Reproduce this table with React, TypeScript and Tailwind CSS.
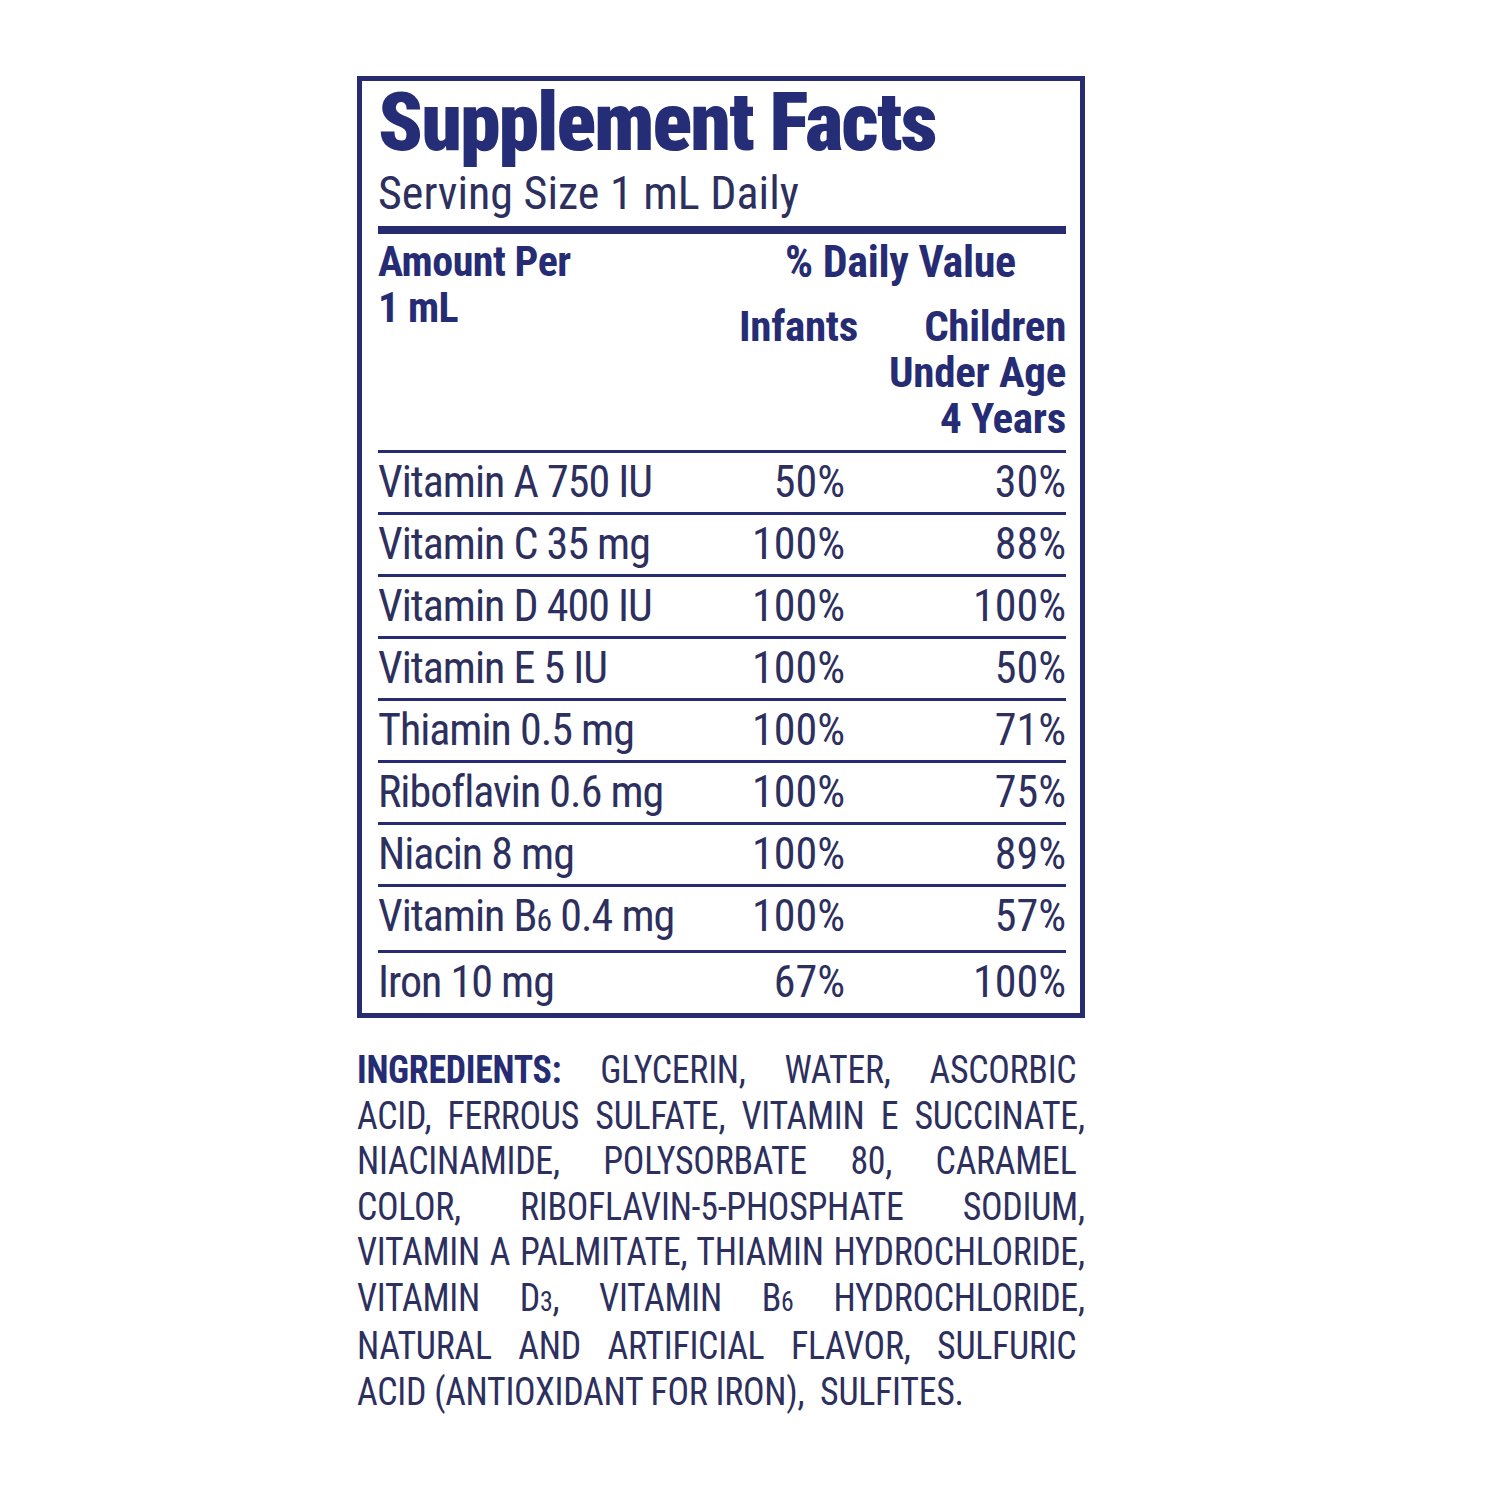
import React from "react";

type Row = { name: React.ReactNode; infants: string; children: string };

const Sub = ({ children }: { children: React.ReactNode }) => (
  <span className="text-[0.72em]">{children}</span>
);

const rows: Row[] = [
  { name: "Vitamin A 750 IU", infants: "50%", children: "30%" },
  { name: "Vitamin C 35 mg", infants: "100%", children: "88%" },
  { name: "Vitamin D 400 IU", infants: "100%", children: "100%" },
  { name: "Vitamin E 5 IU", infants: "100%", children: "50%" },
  { name: "Thiamin 0.5 mg", infants: "100%", children: "71%" },
  { name: "Riboflavin 0.6 mg", infants: "100%", children: "75%" },
  { name: "Niacin 8 mg", infants: "100%", children: "89%" },
  {
    name: (
      <>
        Vitamin B<Sub>6</Sub> 0.4 mg
      </>
    ),
    infants: "100%",
    children: "57%",
  },
  { name: "Iron 10 mg", infants: "67%", children: "100%" },
];

// ingredient lines, justified one by one like the printed panel
const ingredientLines: { text: React.ReactNode; pad?: boolean; last?: boolean }[] = [
  {
    text: (
      <>
        <span className="font-bold text-[#262c74]">INGREDIENTS:</span> GLYCERIN, WATER, ASCORBIC
      </>
    ),
    pad: true,
  },
  { text: "ACID, FERROUS SULFATE, VITAMIN E SUCCINATE," },
  { text: "NIACINAMIDE, POLYSORBATE 80, CARAMEL", pad: true },
  { text: "COLOR, RIBOFLAVIN-5-PHOSPHATE SODIUM," },
  { text: "VITAMIN A PALMITATE, THIAMIN HYDROCHLORIDE," },
  {
    text: (
      <>
        VITAMIN D<Sub>3</Sub>, VITAMIN B<Sub>6</Sub> HYDROCHLORIDE,
      </>
    ),
  },
  { text: "NATURAL AND ARTIFICIAL FLAVOR, SULFURIC", pad: true },
  { text: "ACID (ANTIOXIDANT FOR IRON),  SULFITES.", last: true },
];

export default function App() {
  return (
    <div
      className="min-h-screen bg-white pl-[357px] pt-[76px] text-[#2d305e]"
      style={{ fontFamily: "'Roboto Condensed', Roboto, 'Liberation Sans', sans-serif" }}
    >
      {/* Facts panel */}
      <div className="w-[728px] border-[5px] border-[#272b70] pl-4 pr-[14px] pb-px">
        <h1 className="text-[82px] font-black leading-[82px] tracking-[-2px] text-[#262d77]">
          Supplement Facts
        </h1>
        <p className="mt-[5px] text-[46px] leading-[50px]">Serving Size 1 mL Daily</p>
        <div className="mt-[8px] h-2 bg-[#272b70]" />

        {/* column header */}
        <div className="flex items-start pt-[5px] pb-[9px] font-bold text-[#262c74]">
          <div className="flex-1 text-[42px] leading-[46px] tracking-[-0.5px]">
            <div>Amount Per</div>
            <div>1 mL</div>
          </div>
          <div className="w-[327px] text-[43px] leading-[46px] tracking-[-0.3px]">
            <div className="pr-[4px] text-center text-[44px]">% Daily Value</div>
            <div className="mt-[18px] flex justify-between">
              <div>Infants</div>
              <div className="text-right">
                <div>Children</div>
                <div>Under Age</div>
                <div>4 Years</div>
              </div>
            </div>
          </div>
        </div>

        {/* nutrient rows */}
        {rows.map((r, i) => (
          <div
            key={i}
            className="grid grid-cols-[1fr_130px_221px] border-t-[3px] border-[#272b70] text-[44px] leading-[59px] tracking-[-1px]"
          >
            <div className="whitespace-nowrap">{r.name}</div>
            <div className="text-right tracking-[0px]">{r.infants}</div>
            <div className="text-right tracking-[0px]">{r.children}</div>
          </div>
        ))}
      </div>

      {/* Ingredients */}
      <div className="mt-[30px] w-[728px]">
        <div className="w-[791px] origin-top-left scale-x-[0.92] text-[39px] leading-[45.5px] tracking-[-0.3px]">
          {ingredientLines.map((l, i) => (
            <div
              key={i}
              className={
                l.last
                  ? "whitespace-pre"
                  : l.pad
                    ? "whitespace-nowrap pr-[9px] text-justify [text-align-last:justify]"
                    : "whitespace-nowrap text-justify [text-align-last:justify]"
              }
            >
              {l.text}
            </div>
          ))}
        </div>
      </div>
    </div>
  );
}
